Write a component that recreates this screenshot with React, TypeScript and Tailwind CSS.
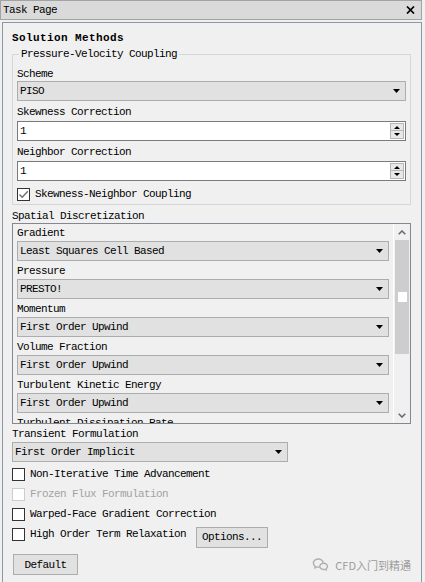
import { RiWechatLine } from 'react-icons/ri';

const mono = { fontFamily: '"Liberation Mono", "Noto Sans CJK SC", monospace' };

function Arrow() {
  return (
    <svg width="7" height="4" viewBox="0 0 7 4" className="shrink-0">
      <polygon points="0,0 7,0 3.5,4" fill="#000" />
    </svg>
  );
}

function Select({ value, className = '' }: { value: string; className?: string }) {
  return (
    <div
      className={`h-[20px] border border-[#adadad] bg-[#e1e1e1] flex items-center justify-between pl-[2px] pr-[5px] ${className}`}
    >
      <span>{value}</span>
      <Arrow />
    </div>
  );
}

function SpinInput({ value }: { value: string }) {
  return (
    <div className="h-[20px] border border-[#7a7a7a] bg-white flex items-center justify-between pl-[2px] pr-[1px]">
      <span>{value}</span>
      <div className="flex flex-col w-[14px] h-[16px]">
        <div className="h-[8px] border border-[#b5b5b5] bg-[#e8e8e8] flex items-center justify-center">
          <svg width="6" height="3" viewBox="0 0 6 3">
            <polygon points="0,3 6,3 3,0" fill="#000" />
          </svg>
        </div>
        <div className="h-[8px] border border-t-0 border-[#b5b5b5] bg-[#e8e8e8] flex items-center justify-center">
          <svg width="6" height="3" viewBox="0 0 6 3">
            <polygon points="0,0 6,0 3,3" fill="#000" />
          </svg>
        </div>
      </div>
    </div>
  );
}

function Check({ label, checked = false, disabled = false }: { label: string; checked?: boolean; disabled?: boolean }) {
  return (
    <div className="flex items-center gap-[5px]">
      <div
        className={`w-[13px] h-[13px] border bg-white flex items-center justify-center ${
          disabled ? 'border-[#cccccc]' : 'border-[#333333]'
        }`}
      >
        {checked && (
          <svg width="11" height="11" viewBox="0 0 11 11">
            <path d="M1.5 5.5 L4.2 8.3 L9.8 2.2" fill="none" stroke="#6b6b6b" strokeWidth="1.3" />
          </svg>
        )}
      </div>
      <span className={disabled ? 'text-[#a3a3a3]' : ''}>{label}</span>
    </div>
  );
}

function Label({ text, h = 'h-[18px]', pb = 'pb-[1px]' }: { text: string; h?: string; pb?: string }) {
  return <div className={`${h} ${pb} flex items-end leading-[14px]`}>{text}</div>;
}

function Chevron({ up }: { up: boolean }) {
  return (
    <svg width="8" height="5" viewBox="0 0 8 5">
      <path d={up ? 'M0.7 4.3 L4 1 L7.3 4.3' : 'M0.7 0.7 L4 4 L7.3 0.7'} fill="none" stroke="#6d6d6d" strokeWidth="1.6" />
    </svg>
  );
}

const spatial = [
  { label: 'Gradient', value: 'Least Squares Cell Based' },
  { label: 'Pressure', value: 'PRESTO!' },
  { label: 'Momentum', value: 'First Order Upwind' },
  { label: 'Volume Fraction', value: 'First Order Upwind' },
  { label: 'Turbulent Kinetic Energy', value: 'First Order Upwind' },
  { label: 'Turbulent Dissipation Rate', value: 'First Order Upwind' },
];

export default function App() {
  return (
    <div
      className="w-[425px] h-[582px] overflow-hidden bg-[#f0f0f0] text-[11px] tracking-[-0.6px] leading-[14px] text-black"
      style={mono}
    >
      {/* title bar */}
      <div className="w-[422px] h-[20px] border border-[#a3a3a3] bg-[#dadada] flex items-center justify-between pl-[2px] pr-[6px]">
        <span>Task Page</span>
        <svg width="9" height="8" viewBox="0 0 9 8">
          <path d="M1 0.5 L8 7.5 M8 0.5 L1 7.5" stroke="#000" strokeWidth="1.7" />
        </svg>
      </div>

      <div className="mt-[2px] ml-[2px] w-[420px] h-[570px] border border-[#8c97a3] pl-[9px] pr-[10px]">
        <div className="mt-[8px] h-[14px] font-bold tracking-[0.4px]">Solution Methods</div>

        <fieldset className="mt-[2px] border border-[#d6d6d6] px-[4px] pb-[3px]">
          <legend className="ml-[2px] px-[2px] leading-[14px]">Pressure-Velocity Coupling</legend>
          <Label text="Scheme" h="h-[20px]" pb="pb-0" />
          <Select value="PISO" />
          <Label text="Skewness Correction" h="h-[20px]" pb="pb-[2px]" />
          <SpinInput value="1" />
          <Label text="Neighbor Correction" h="h-[20px]" pb="pb-[2px]" />
          <SpinInput value="1" />
          <div className="mt-[6px] h-[14px] flex items-center">
            <Check label="Skewness-Neighbor Coupling" checked />
          </div>
        </fieldset>

        <Label text="Spatial Discretization" pb="pb-0" />
        <div className="h-[201px] border border-[#828790] flex">
          <div className="flex-1 px-[4px] overflow-hidden">
            {spatial.map((s, i) => (
              <div key={s.label}>
                <Label text={s.label} h={i === 0 ? 'h-[17px]' : 'h-[18px]'} />
                <Select value={s.value} />
              </div>
            ))}
          </div>
          <div className="w-[17px] border-l border-white bg-[#f0f0f0] flex flex-col">
            <div className="h-[16px] flex items-center justify-center">
              <Chevron up />
            </div>
            <div className="mx-[1px] h-[114px] bg-[#cdcdcd] pt-[52px] pl-[3px]">
              <div className="w-[9px] h-[10px] bg-white" />
            </div>
            <div className="flex-1" />
            <div className="h-[16px] flex items-center justify-center">
              <Chevron up={false} />
            </div>
          </div>
        </div>

        <Label text="Transient Formulation" />
        <Select value="First Order Implicit" className="w-[276px]" />

        <div className="mt-[2px]">
          <div className="h-[20px] flex items-center">
            <Check label="Non-Iterative Time Advancement" />
          </div>
          <div className="h-[20px] flex items-center">
            <Check label="Frozen Flux Formulation" disabled />
          </div>
          <div className="h-[20px] flex items-center">
            <Check label="Warped-Face Gradient Correction" />
          </div>
          <div className="h-[20px] flex items-center gap-[10px]">
            <Check label="High Order Term Relaxation" />
            <button className="mt-[6px] w-[72px] h-[21px] border border-[#adadad] bg-[#e1e1e1] flex items-center justify-center">
              Options...
            </button>
          </div>
        </div>

        <div className="mt-[10px] flex items-center justify-between pr-[0px]">
          <button className="ml-[1px] w-[65px] h-[21px] border border-[#adadad] bg-[#e1e1e1] flex items-center justify-center">
            Default
          </button>
          <div
            className="flex items-center gap-[6px] text-[#9c9c9c] tracking-normal text-[11px]"
            style={{ fontFamily: '"Noto Sans CJK SC", sans-serif' }}
          >
            <RiWechatLine className="w-[17px] h-[17px] text-[#b0b0b0]" />
            <span>CFD入门到精通</span>
          </div>
        </div>
      </div>
    </div>
  );
}
